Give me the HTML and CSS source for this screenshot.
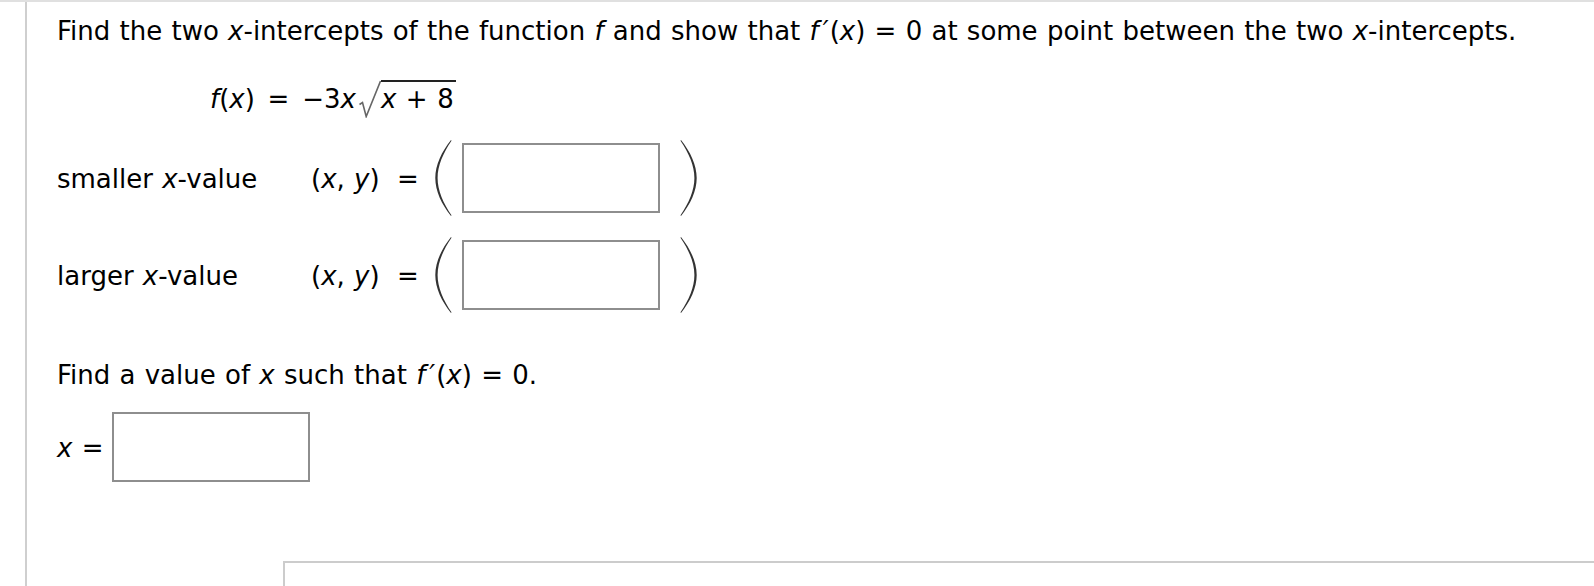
FILE: index.html
```html
<!DOCTYPE html>
<html lang="en">
<head>
<meta charset="utf-8">
<title>x-intercepts</title>
<link rel="stylesheet" href="styles.css">
</head>
<body>
<div class="page">
  <div class="panel">
    <p class="q">Find the two <i>x</i>-intercepts of the function <i>f</i> and show that <i>f</i><i class="pr">′</i>(<i>x</i>) = 0 at some point between the two <i>x</i>-intercepts.</p>
    <div class="formula"><i>f</i>(<i>x</i>) = −3<i>x</i><svg class="rad" width="22" height="38" viewBox="0 0 22 38"><path d="M0.5 24.5 L3.5 22.5 L7.2 36.5 L21.5 1" fill="none" stroke="#666" stroke-width="1.6" stroke-linejoin="miter"/></svg><span class="radicand"><i>x</i> + 8</span></div>
    <div class="row">
      <span class="label">smaller <i>x</i>-value</span>
      <span class="xy">(<i>x</i>, <i>y</i>)</span>
      <span class="eq">=</span>
      <svg class="paren" width="18" height="78" viewBox="0 0 18 78"><path d="M17 1 C7.5 13 1.3 26 1.3 39 C1.3 52 7.5 65 17 77 L17.5 76.3 C9.2 64 3.6 51.5 3.6 39 C3.6 26.5 9.2 14 17.5 1.7 Z" fill="#333"/></svg>
      <span class="box"></span>
      <svg class="paren right" width="18" height="78" viewBox="0 0 18 78"><path d="M1 1 C10.5 13 16.7 26 16.7 39 C16.7 52 10.5 65 1 77 L0.5 76.3 C8.8 64 14.4 51.5 14.4 39 C14.4 26.5 8.8 14 0.5 1.7 Z" fill="#333"/></svg>
    </div>
    <div class="row second">
      <span class="label">larger <i>x</i>-value</span>
      <span class="xy">(<i>x</i>, <i>y</i>)</span>
      <span class="eq">=</span>
      <svg class="paren" width="18" height="78" viewBox="0 0 18 78"><path d="M17 1 C7.5 13 1.3 26 1.3 39 C1.3 52 7.5 65 17 77 L17.5 76.3 C9.2 64 3.6 51.5 3.6 39 C3.6 26.5 9.2 14 17.5 1.7 Z" fill="#333"/></svg>
      <span class="box"></span>
      <svg class="paren right" width="18" height="78" viewBox="0 0 18 78"><path d="M1 1 C10.5 13 16.7 26 16.7 39 C16.7 52 10.5 65 1 77 L0.5 76.3 C8.8 64 14.4 51.5 14.4 39 C14.4 26.5 8.8 14 0.5 1.7 Z" fill="#333"/></svg>
    </div>
    <p class="q q2">Find a value of <i>x</i> such that <i>f</i><i class="pr">′</i>(<i>x</i>) = 0.</p>
    <div class="xrow">
      <span class="xlabel"><i>x</i> =</span>
      <span class="box"></span>
    </div>
    <div class="next"></div>
  </div>
</div>
</body>
</html>
```

FILE: styles.css
```css
html, body {
  margin: 0;
  padding: 0;
  height: 586px;
  overflow: hidden;
  background: #fff;
}
body {
  font-family: "DejaVu Sans", Verdana, sans-serif;
  font-size: 26px;
  word-spacing: 1px;
  color: #000;
}
i {
  font-style: italic;
}
.pr {
  margin-left: 4px;
  margin-right: 1px;
}
.page {
  border-top: 2px solid #e0e0e0;
  height: 584px;
}
.panel {
  margin-left: 25px;
  border-left: 2px solid #cfcfcf;
  padding: 14px 0 0 30px;
  height: 100%;
  box-sizing: border-box;
}
.q {
  margin: 0;
  line-height: 30px;
  white-space: nowrap;
}
.formula {
  margin: 34px 0 0 153px;
  line-height: 30px;
  height: 38px;
  word-spacing: 4.5px;
}
.rad {
  vertical-align: -10px;
  margin-left: 3px;
}
.radicand {
  display: inline-block;
  border-top: 2px solid #222;
  padding-top: 2px;
  padding-right: 2px;
  line-height: 30px;
  word-spacing: 1.3px;
}
.row {
  display: flex;
  align-items: center;
  margin-top: 25px;
  height: 70px;
  line-height: 30px;
}
.row.second {
  margin-top: 27px;
}
.label {
  width: 254px;
  padding-top: 2px;
}
.xy {
  width: 86px;
  padding-top: 2px;
}
.eq {
  width: 22px;
  padding-top: 2px;
}
.paren {
  margin-left: 15px;
  display: block;
}
.paren.right {
  margin-left: 20px;
}
.box {
  display: block;
  width: 198px;
  height: 70px;
  box-sizing: border-box;
  border: 2px solid #8e8e8e;
  margin-left: 10px;
}
.q2 {
  margin-top: 50px;
}
.xrow {
  display: flex;
  align-items: center;
  margin-top: 22px;
  height: 70px;
  line-height: 30px;
}
.xlabel {
  width: 55px;
  padding-top: 1px;
}
.xrow .box {
  margin-left: 0;
}
.next {
  margin: 79px 0 0 226px;
  border-top: 2px solid #cccccc;
  border-left: 2px solid #cccccc;
  height: 60px;
}
```
